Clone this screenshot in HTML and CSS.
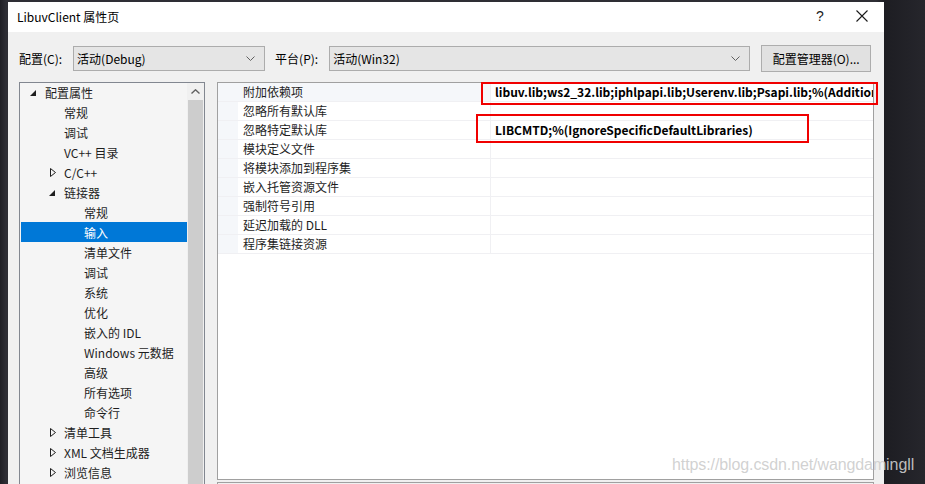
FILE: index.html
```html
<!DOCTYPE html>
<html lang="zh-CN">
<head>
<meta charset="utf-8">
<title>LibuvClient 属性页</title>
<link rel="stylesheet" href="styles.css">
</head>
<body>
<div class="page">
  <div class="dialog">
    <div class="titlebar">
      <span class="title">LibuvClient 属性页</span>
      <span class="help">?</span>
      <span class="close">
        <svg width="12" height="12" viewBox="0 0 12 12"><path d="M0.5 0.5 L11.5 11.5 M11.5 0.5 L0.5 11.5" stroke="#1a1a1a" stroke-width="1.1" fill="none"/></svg>
      </span>
    </div>

    <div class="toolbar">
      <span class="label">配置(C):</span>
      <div class="combo combo-config">
        <span>活动(Debug)</span>
        <svg class="chev" width="9" height="5" viewBox="0 0 9 5"><path d="M0.5 0.5 L4.5 4.5 L8.5 0.5" stroke="#606060" stroke-width="1" fill="none"/></svg>
      </div>
      <span class="label label-platform">平台(P):</span>
      <div class="combo combo-platform">
        <span>活动(Win32)</span>
        <svg class="chev" width="9" height="5" viewBox="0 0 9 5"><path d="M0.5 0.5 L4.5 4.5 L8.5 0.5" stroke="#606060" stroke-width="1" fill="none"/></svg>
      </div>
      <div class="button">配置管理器(O)...</div>
    </div>

    <div class="main">
      <div class="tree">
        <ul class="tree-list">
          <li class="node l0"><span class="tw exp"><svg width="6" height="6" viewBox="0 0 6 6"><path d="M6 0 L6 6 L0 6 Z" fill="#1e1e1e"/></svg></span>配置属性</li>
          <li class="node l1"><span class="tw"></span>常规</li>
          <li class="node l1"><span class="tw"></span>调试</li>
          <li class="node l1"><span class="tw"></span>VC++ 目录</li>
          <li class="node l1"><span class="tw col"><svg width="6" height="9" viewBox="0 0 6 9"><path d="M0.5 0.5 L5.5 4.5 L0.5 8.5 Z" fill="none" stroke="#1e1e1e" stroke-width="1"/></svg></span>C/C++</li>
          <li class="node l1"><span class="tw exp"><svg width="6" height="6" viewBox="0 0 6 6"><path d="M6 0 L6 6 L0 6 Z" fill="#1e1e1e"/></svg></span>链接器</li>
          <li class="node l2"><span class="tw"></span>常规</li>
          <li class="node l2 selected"><span class="tw"></span>输入</li>
          <li class="node l2"><span class="tw"></span>清单文件</li>
          <li class="node l2"><span class="tw"></span>调试</li>
          <li class="node l2"><span class="tw"></span>系统</li>
          <li class="node l2"><span class="tw"></span>优化</li>
          <li class="node l2"><span class="tw"></span>嵌入的 IDL</li>
          <li class="node l2"><span class="tw"></span>Windows 元数据</li>
          <li class="node l2"><span class="tw"></span>高级</li>
          <li class="node l2"><span class="tw"></span>所有选项</li>
          <li class="node l2"><span class="tw"></span>命令行</li>
          <li class="node l1"><span class="tw col"><svg width="6" height="9" viewBox="0 0 6 9"><path d="M0.5 0.5 L5.5 4.5 L0.5 8.5 Z" fill="none" stroke="#1e1e1e" stroke-width="1"/></svg></span>清单工具</li>
          <li class="node l1"><span class="tw col"><svg width="6" height="9" viewBox="0 0 6 9"><path d="M0.5 0.5 L5.5 4.5 L0.5 8.5 Z" fill="none" stroke="#1e1e1e" stroke-width="1"/></svg></span>XML 文档生成器</li>
          <li class="node l1"><span class="tw col"><svg width="6" height="9" viewBox="0 0 6 9"><path d="M0.5 0.5 L5.5 4.5 L0.5 8.5 Z" fill="none" stroke="#1e1e1e" stroke-width="1"/></svg></span>浏览信息</li>
        </ul>
        <div class="vscroll">
          <div class="arrow-up">
            <svg width="9" height="5" viewBox="0 0 9 5"><path d="M0.5 4.5 L4.5 0.8 L8.5 4.5" stroke="#606060" stroke-width="1.4" fill="none"/></svg>
          </div>
          <div class="thumb"></div>
        </div>
      </div>

      <div class="right">
        <div class="grid">
          <div class="row first"><div class="gutter"></div><div class="name">附加依赖项</div><div class="value">libuv.lib;ws2_32.lib;iphlpapi.lib;Userenv.lib;Psapi.lib;%(AdditionalDependencies)</div></div>
          <div class="row"><div class="gutter"></div><div class="name">忽略所有默认库</div><div class="value"></div></div>
          <div class="row"><div class="gutter"></div><div class="name">忽略特定默认库</div><div class="value">LIBCMTD;%(IgnoreSpecificDefaultLibraries)</div></div>
          <div class="row"><div class="gutter"></div><div class="name">模块定义文件</div><div class="value"></div></div>
          <div class="row"><div class="gutter"></div><div class="name">将模块添加到程序集</div><div class="value"></div></div>
          <div class="row"><div class="gutter"></div><div class="name">嵌入托管资源文件</div><div class="value"></div></div>
          <div class="row"><div class="gutter"></div><div class="name">强制符号引用</div><div class="value"></div></div>
          <div class="row"><div class="gutter"></div><div class="name">延迟加载的 DLL</div><div class="value"></div></div>
          <div class="row"><div class="gutter"></div><div class="name">程序集链接资源</div><div class="value"></div></div>
        </div>
        <div class="desc"></div>
      </div>
    </div>
  </div>

  <div class="mark mark-deps"></div>
  <div class="mark mark-ignore"></div>
  <div class="watermark">https://blog.csdn.net/wangdamingll</div>
</div>
</body>
</html>
```

FILE: styles.css
```css
* { box-sizing: border-box; }
html, body { margin: 0; padding: 0; }
body {
  width: 925px;
  height: 484px;
  overflow: hidden;
  background: #26262b;
  font-family: "Noto Sans CJK SC", "Noto Sans", sans-serif;
  font-size: 12px;
  color: #1e1e1e;
}
.page {
  position: relative;
  width: 925px;
  height: 484px;
  padding: 2px 0 0 8px;
  background: linear-gradient(90deg, #1f1f25 0, #2e2e35 6px, #2e2e34 876px, #1d1d22 884px, #26262c 100%);
}
.dialog {
  width: 876px;
  height: 490px;
  background: #f0f0f0;
  display: flex;
  flex-direction: column;
}
.titlebar {
  height: 30px;
  background: #ffffff;
  display: flex;
  align-items: center;
  padding-left: 9px;
  padding-bottom: 2px;
  flex: none;
}
.title { flex: 1; font-size: 12px; color: #000; }
.help {
  width: 20px;
  text-align: center;
  font-family: "Liberation Sans", sans-serif;
  font-size: 14px;
  color: #1a1a1a;
  margin-right: 26px;
}
.close {
  width: 12px;
  height: 12px;
  display: flex;
  margin-right: 16px;
}
.toolbar {
  height: 50px;
  flex: none;
  display: flex;
  align-items: flex-start;
  padding: 13px 0 0 11px;
}
.label { line-height: 25px; margin-top: 1px; color: #000; }
.combo {
  height: 25px;
  margin-top: 1px;
  background: #e5e5e5;
  border: 1px solid #acacac;
  display: flex;
  align-items: center;
  justify-content: space-between;
  padding: 0 9px 0 3px;
  color: #000;
}
.combo-config { width: 192px; margin-left: 11px; }
.label-platform { margin-left: 10px; }
.combo-platform { width: 421px; margin-left: 11px; }
.chev { flex: none; }
.button {
  width: 110px;
  height: 27px;
  margin-left: 11px;
  background: #e1e1e1;
  border: 1px solid #adadad;
  display: flex;
  align-items: center;
  justify-content: center;
  color: #000;
}
.main {
  flex: 1;
  display: flex;
  padding: 0 10px 0 11px;
  gap: 12px;
  min-height: 0;
}
.tree {
  width: 186px;
  height: 420px;
  border: 1px solid #828790;
  background: #f5f5f5;
  display: flex;
  flex: none;
}
.tree-list {
  list-style: none;
  margin: -1px 0 0 0;
  padding: 0 0 0 1px;
  flex: 1;
}
.node {
  height: 20px;
  display: flex;
  align-items: center;
  white-space: nowrap;
  color: #1e1e1e;
}
.tw {
  width: 13px;
  height: 20px;
  flex: none;
  display: flex;
  align-items: center;
}
.tw.exp svg { margin-top: 2px; }
.l0 { padding-left: 9px; }
.l0 .tw { margin-right: 2px; }
.l1 { padding-left: 28px; }
.l1 .tw { margin-right: 2px; }
.l1 .tw.col svg { margin-left: 1px; }
.l2 { padding-left: 48px; }
.l2 .tw { margin-right: 2px; }
.node.selected {
  background: #0078d7;
  color: #ffffff;
}
.vscroll {
  width: 17px;
  flex: none;
  background: #f0f0f0;
  display: flex;
  flex-direction: column;
  align-items: center;
}
.arrow-up {
  height: 17px;
  width: 15px;
  display: flex;
  align-items: center;
  justify-content: center;
}
.thumb {
  width: 15px;
  flex: 1;
  background: #cdcdcd;
}
.right {
  width: 657px;
  flex: none;
  display: flex;
  flex-direction: column;
  gap: 2px;
}
.grid {
  height: 398px;
  border: 1px solid #a0a0a0;
  background: #ffffff;
  overflow: hidden;
  flex: none;
}
.row {
  height: 19px;
  display: flex;
  border-bottom: 1px solid #f0f0f3;
}
.gutter {
  width: 20px;
  flex: none;
  background: #f5f7fa;
}
.name {
  width: 253px;
  flex: none;
  padding-left: 5px;
  line-height: 18px;
  border-right: 1px solid #f0f0f3;
  white-space: nowrap;
  color: #1e1e1e;
}
.row.first .name { background: #f5f7fa; }
.value {
  flex: 1;
  padding-left: 4px;
  line-height: 18px;
  font-weight: bold;
  white-space: nowrap;
  overflow: hidden;
  color: #000;
}
.desc {
  flex: 1;
  border-top: 1px solid #a0a0a0;
  border-left: 1px solid #a0a0a0;
  border-right: 1px solid #a0a0a0;
  background: #f0f0f0;
}
.mark {
  position: absolute;
  border: 2px solid #f00000;
}
.mark-deps { left: 481px; top: 82px; width: 397px; height: 23px; }
.mark-ignore { left: 476px; top: 114px; width: 333px; height: 29px; }
.watermark {
  position: absolute;
  left: 672px;
  top: 456px;
  font-family: "Liberation Sans", sans-serif;
  font-size: 16px;
  color: rgba(205, 205, 205, 0.92);
  letter-spacing: -0.1px;
  white-space: nowrap;
}
```
